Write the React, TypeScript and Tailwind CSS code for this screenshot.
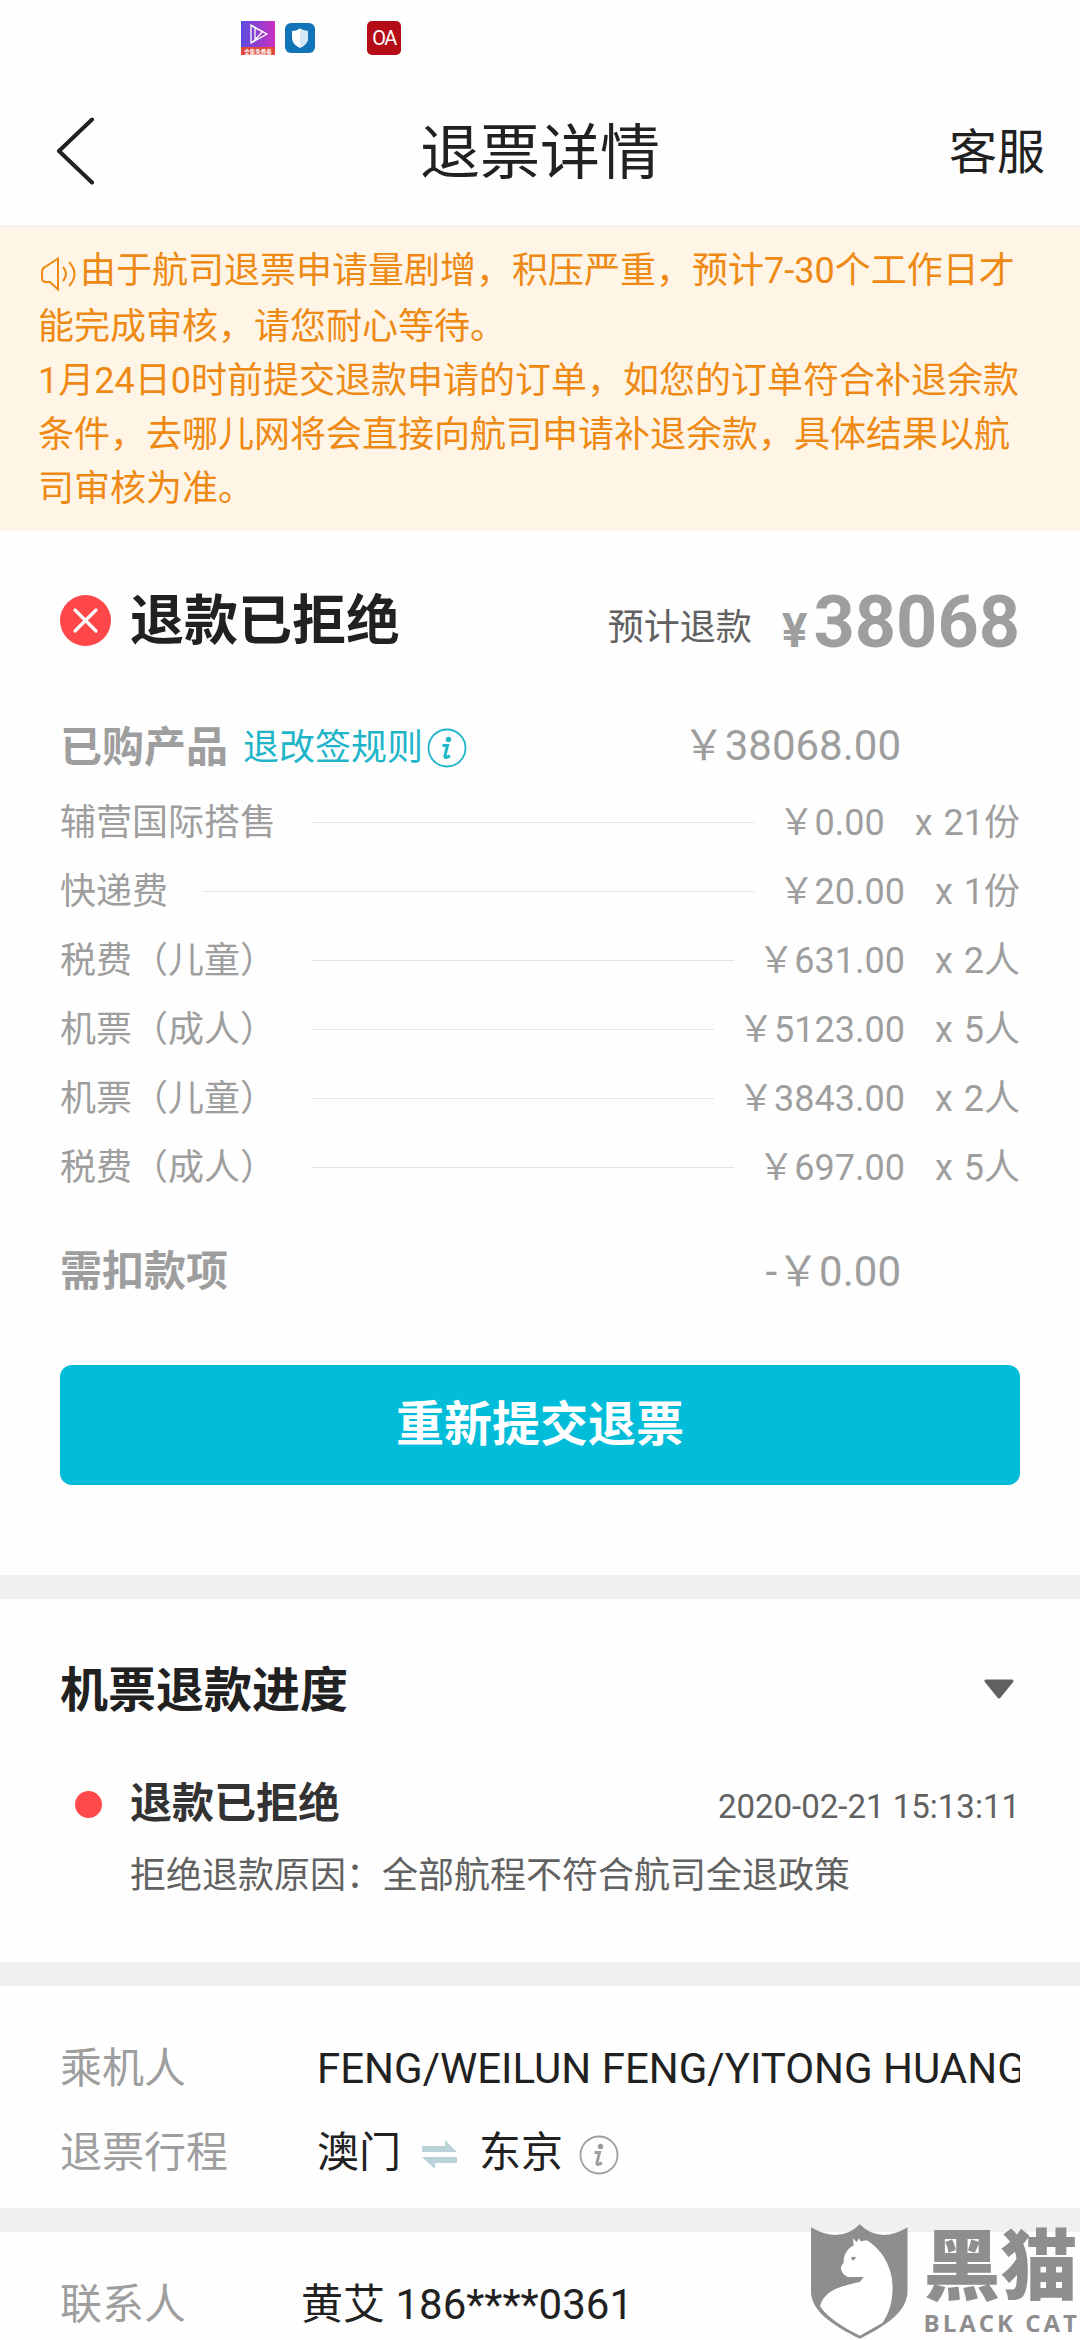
import React from "react";

interface FeeItem {
  name: string;
  price: string;
  count: string;
}

const fees: FeeItem[] = [
  { name: "辅营国际搭售", price: "￥0.00", count: "x 21份" },
  { name: "快递费", price: "￥20.00", count: "x 1份" },
  { name: "税费（儿童）", price: "￥631.00", count: "x 2人" },
  { name: "机票（成人）", price: "￥5123.00", count: "x 5人" },
  { name: "机票（儿童）", price: "￥3843.00", count: "x 2人" },
  { name: "税费（成人）", price: "￥697.00", count: "x 5人" },
];

const InfoIcon: React.FC<{ className?: string }> = ({ className }) => (
  <svg viewBox="0 0 40 40" className={className} fill="none" stroke="currentColor">
    <circle cx="20" cy="20" r="18.5" strokeWidth="1.8" />
    <circle cx="21.5" cy="11.5" r="2.7" fill="currentColor" stroke="none" />
    <path d="M15.500 17.500h5l-2.500 10q-.4 2.500 1.500 1.800l3.500-1.300M20.500 17.500l-2.500 10" strokeWidth="3" />
  </svg>
);

const Divider = () => <div className="h-6 shrink-0 bg-[#eff0f2]" />;

const StatusBar = () => (
  <div className="flex h-20 shrink-0 items-start pl-[241px] pt-[21px]">
    <svg viewBox="0 0 34 34" className="h-[34px] w-[34px]">
      <defs>
        <linearGradient id="play" x1="0" y1="0" x2="1" y2="0">
          <stop offset="0" stopColor="#5a4be0" />
          <stop offset="1" stopColor="#c930c0" />
        </linearGradient>
      </defs>
      <path d="M0 0h34v34H0z" fill="url(#play)" />
      <path d="M0 26h34v8H0z" fill="#e2483c" />
      <path d="M10 4v18l16-9zM10 4l4 3v12l-4 3M14 7l12 6M14 19l8-9" fill="none" stroke="#fff" strokeWidth="1.300" />
      <text x="17" y="32.500" textAnchor="middle" fontSize="5.500" fontWeight="700" fill="#fff">全集免费看</text>
    </svg>
    <svg viewBox="0 0 30 30" className="ml-2.5 mt-0.5 h-[30px] w-[30px]">
      <rect width="30" height="30" rx="6" fill="#1173b8" />
      <path d="M15 5.500q4 2.500 8 2.500v7q0 6-8 10-8-4-8-10V8q4 0 8-2.500z" fill="#fff" />
      <path d="M15 5.500q4 2.500 8 2.500v7q0 6-8 10z" fill="#d3e9f5" />
    </svg>
    <div className="ml-[52px] flex h-[34px] w-[34px] items-center justify-center rounded-[5px] bg-[#b50d18] text-[20px] tracking-[-1.500px] text-white">
      OA
    </div>
  </div>
);

const Header = () => (
  <div className="flex h-[145px] shrink-0 items-center justify-between pl-[54px] pr-[35px] pt-0.5 text-[#212121]">
    <div className="flex w-[77px]">
      <svg viewBox="0 0 42 68" className="-mt-1.5 h-[68px] w-[42px]">
        <path d="M38 2.500 5 34l33 31.500" fill="none" stroke="currentColor" strokeWidth="4" strokeLinecap="round" strokeLinejoin="round" />
      </svg>
    </div>
    <h1 className="text-[60px] leading-none">退票详情</h1>
    <span className="-mt-0.5 text-[48px] leading-none">客服</span>
  </div>
);

const Notice = () => (
  <div className="h-[306px] shrink-0 border-t-[3px] border-[#f6f1ef] bg-[#fff5e6] pl-[38px] pt-[14px] text-[36px] leading-[54px] text-[#ee8a14]">
    <p className="flex h-[58px] items-center">
      <svg viewBox="0 0 42 36" className="mt-1.5 h-9 w-[42px]" fill="none" stroke="currentColor" strokeWidth="2">
        <path d="M7 11 20 2.500v31L12 26H7q-3-1-3-3.500v-7q0-3 3-4.500zM25 11q6 7 0 14M31 6q11 12 0 24" />
      </svg>
      由于航司退票申请量剧增，积压严重，预计7-30个工作日才
    </p>
    <p>能完成审核，请您耐心等待。</p>
    <p>1月24日0时前提交退款申请的订单，如您的订单符合补退余款</p>
    <p>条件，去哪儿网将会直接向航司申请补退余款，具体结果以航</p>
    <p>司审核为准。</p>
  </div>
);

const RefundSummary = () => (
  <div className="h-[1044px] shrink-0 px-[60px] pt-[53px] text-[#9e9e9e]">
    <div className="flex h-[72px] items-center">
      <svg viewBox="0 0 51 51" className="h-[51px] w-[51px]">
        <circle cx="25.500" cy="25.500" r="25.500" fill="#ff4649" />
        <path d="m15 15 21 21M36 15 15 36" stroke="#fff" strokeWidth="3.200" strokeLinecap="round" />
      </svg>
      <h2 className="ml-[19px] pt-[3px] text-[54px] font-bold leading-none text-[#212121]">退款已拒绝</h2>
      <span className="ml-auto pt-4 text-[36px] leading-none text-[#616161]">预计退款</span>
      <span className="ml-[30px] flex items-baseline pt-1.5 font-bold leading-none">
        <span className="mr-[6px] text-[48px]">¥</span>
        <span className="text-[72px]">38068</span>
      </span>
    </div>

    <div className="mt-[63px] flex h-[54px] items-center">
      <h3 className="pt-[3px] text-[42px] font-bold leading-none">已购产品</h3>
      <span className="ml-[15px] pt-[3px] text-[36px] leading-none text-[#1fb5c9]">退改签规则</span>
      <InfoIcon className="ml-1 mt-1 h-10 w-10 text-[#1fb5c9]" />
      <span className="ml-auto mr-[119px] text-[42px] leading-none">￥38068.00</span>
    </div>

    <div className="mt-[15px] text-[36px] leading-none">
      {fees.map((fee, i) => (
        <div key={i} className="flex h-[69px] items-center">
          <span>{fee.name}</span>
          <div className="ml-9 mr-6 h-px flex-1 bg-[#e4e4e4]" />
          <span>{fee.price}</span>
          <span className="ml-[30px] [word-spacing:2px]">{fee.count}</span>
        </div>
      ))}
    </div>

    <div className="mt-[43px] flex h-[54px] items-center justify-between text-[42px] leading-none">
      <h3 className="font-bold">需扣款项</h3>
      <span className="mr-[119px]">-￥0.00</span>
    </div>

    <button className="mt-[66px] flex h-[120px] w-full items-center justify-center rounded-[12px] bg-[#02bdd9] text-[48px] font-bold leading-none text-white">
      重新提交退票
    </button>
  </div>
);

const Progress = () => (
  <div className="h-[363px] shrink-0 px-[60px] pt-[62px] text-[#616161]">
    <div className="flex h-[60px] items-center justify-between">
      <h2 className="text-[48px] font-bold leading-none text-[#212121]">机票退款进度</h2>
      <svg viewBox="0 0 30 20" className="-mt-1 mr-[6px] h-5 w-[30px]">
        <path d="M2 2h26L15 18z" fill="#616161" stroke="#616161" strokeWidth="3" strokeLinejoin="round" />
      </svg>
    </div>
    <div className="mt-[56px] flex h-[54px] items-center pl-[15px]">
      <div className="h-[27px] w-[27px] rounded-full bg-[#ff494b]" />
      <span className="ml-7 text-[42px] font-bold leading-none text-[#333]">退款已拒绝</span>
      <span className="ml-auto mt-1 text-[33px] leading-none">2020-02-21 15:13:11</span>
    </div>
    <p className="ml-[70px] mt-[18px] text-[36px] leading-[54px]">拒绝退款原因：全部航程不符合航司全退政策</p>
  </div>
);

const Trip = () => (
  <div className="h-[222px] shrink-0 px-[60px] pt-[41px] text-[42px] leading-none text-[#212121]">
    <div className="flex h-[84px] items-center">
      <span className="w-[257px] shrink-0 text-[#9e9e9e]">乘机人</span>
      <span className="overflow-hidden whitespace-nowrap">FENG/WEILUN FENG/YITONG HUANG</span>
    </div>
    <div className="flex h-[84px] items-center">
      <span className="w-[257px] shrink-0 text-[#9e9e9e]">退票行程</span>
      <span>澳门</span>
      <svg viewBox="0 0 36 30" className="mx-[21px] mt-1 h-[30px] w-[36px]" fill="#b9d3d9">
        <path d="M0 6h23V0l12 12H0zM0 17h35v6H13v6z" />
      </svg>
      <span>东京</span>
      <InfoIcon className="ml-4 mt-1 h-10 w-10 text-[#9e9e9e]" />
    </div>
  </div>
);

const Watermark = () => (
  <div className="absolute bottom-0 right-0 flex h-[116px] w-[270px] text-[#8f8d8e]">
    <svg viewBox="0 0 98 116" className="ml-px h-[116px] w-[98px]">
      <path d="M0 3Q29 20 49 0q20 20 48 3v64c0 20-20 34-48 48C21 101 0 87 0 67z" fill="currentColor" />
      <path
        d="M42 14l4 4 2-4 2 3 6-1C70 24 82 42 82 63c0 16-4 27-10 36L49 112C30 102 15 92 9 82c5-16 21-20 40-24l4-5H37c-4-2-7-5-7-10l3-5c-1-7 4-14 10-17z"
        fill="#fff"
      />
      <path d="M40 34q3 5 5-1-3-1-5 1z" fill="currentColor" />
    </svg>
    <div className="ml-[15px] flex flex-col whitespace-nowrap">
      <span className="mt-[7px] text-[77px] font-black leading-[74px]">黑猫</span>
      <span className="mt-[6px] font-['Open_Sans'] text-[24px] font-bold leading-[24px] tracking-[3px]">BLACK CAT</span>
    </div>
  </div>
);

const App: React.FC = () => {
  return (
    <div className="relative flex h-[2340px] w-[1080px] flex-col overflow-hidden bg-[#fefefe] font-['Roboto','Noto_Sans_CJK_SC',sans-serif]">
      <StatusBar />
      <Header />
      <Notice />
      <RefundSummary />
      <Divider />
      <Progress />
      <Divider />
      <Trip />
      <Divider />
      <div className="flex h-[144px] shrink-0 items-center px-[60px] pt-0.5 text-[42px] leading-none text-[#212121]">
        <span className="w-[241px] text-[#9e9e9e]">联系人</span>
        <span>黄艾 186****0361</span>
      </div>
      <Watermark />
    </div>
  );
};

export default App;
